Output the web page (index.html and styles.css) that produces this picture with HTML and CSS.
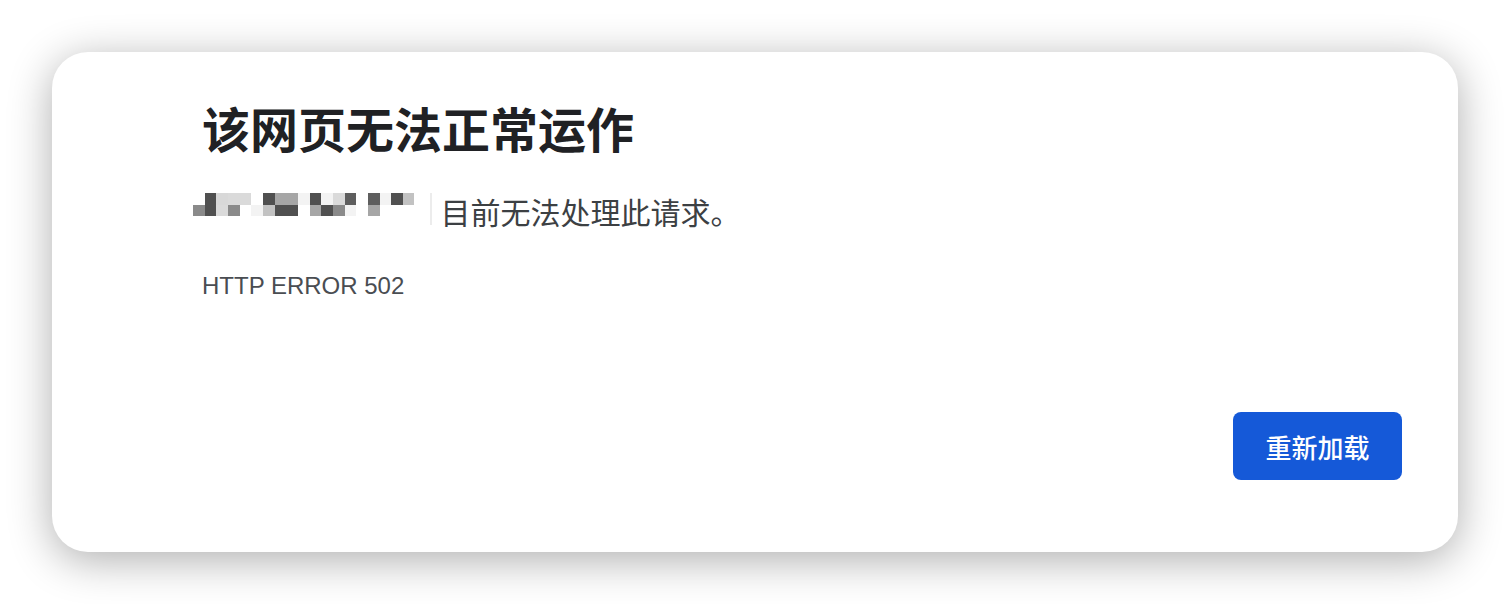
FILE: index.html
```html
<!DOCTYPE html>
<html lang="zh-CN">
<head>
<meta charset="utf-8">
<title>该网页无法正常运作</title>
<link rel="stylesheet" href="styles.css">
</head>
<body>
<div class="card">
  <div class="content">
    <h1 class="title">该网页无法正常运作</h1>
    <p class="subtitle">
      <span class="mosaic" aria-hidden="true">
        <span class="row">
          <i class="c0"></i><i class="c5"></i><i class="c3"></i><i class="c9"></i><i class="c9"></i><i class="c0"></i><i class="c5"></i><i class="c7"></i><i class="c7"></i><i class="c1"></i><i class="c5"></i><i class="c1"></i><i class="c9"></i><i class="c4"></i><i class="c0"></i><i class="c4"></i><i class="c1"></i><i class="c5"></i><i class="c8"></i>
        </span>
        <span class="row">
          <i class="c6"></i><i class="c5"></i><i class="c9"></i><i class="c6"></i><i class="c0"></i><i class="c1"></i><i class="c8"></i><i class="c5"></i><i class="c5"></i><i class="c0"></i><i class="c7"></i><i class="c5"></i><i class="c6"></i><i class="c1"></i><i class="c0"></i><i class="c7"></i><i class="c0"></i><i class="c0"></i><i class="c0"></i>
        </span>
      </span>
      <span class="caret" aria-hidden="true"></span>
      <span class="msg">目前无法处理此请求。</span>
    </p>
    <div class="code">HTTP ERROR 502</div>
  </div>
  <div class="actions">
    <button class="reload">重新加载</button>
  </div>
</div>
</body>
</html>
```

FILE: styles.css
```css
html, body {
  margin: 0;
  padding: 0;
  background: #ffffff;
}

body {
  padding: 52px;
  font-family: "Liberation Sans", "Noto Sans CJK SC", sans-serif;
}

.card {
  box-sizing: border-box;
  width: 1406px;
  height: 500px;
  background: #ffffff;
  border-radius: 36px;
  box-shadow: 0 8px 44px rgba(0, 0, 0, 0.32);
  padding: 45px 56px 72px 150px;
  display: flex;
  flex-direction: column;
}

.content {
  flex: 1;
  display: flex;
  flex-direction: column;
}

.title {
  margin: 0;
  font-family: "Noto Sans CJK SC", sans-serif;
  font-weight: 700;
  font-size: 48px;
  line-height: 60px;
  color: #202124;
}

.subtitle {
  margin: 36px 0 0 0;
  display: flex;
  align-items: flex-start;
  height: 40px;
}

.mosaic {
  display: flex;
  flex-direction: column;
  margin-left: -9px;
  filter: blur(0.6px);
}

.row {
  display: flex;
}

.row i {
  display: block;
  width: 11.67px;
  height: 11.5px;
}

.c0 { background: #ffffff; }
.c1 { background: #f3f3f3; }
.c3 { background: #d8d8d8; }
.c4 { background: #5e5e5e; }
.c5 { background: #505050; }
.c6 { background: #8a8a8a; }
.c7 { background: #a6a6a6; }
.c8 { background: #c2c2c2; }
.c9 { background: #dadada; }

.caret {
  display: block;
  width: 2px;
  height: 32px;
  margin-left: 16px;
  background: #ececec;
}

.msg {
  margin-left: 8px;
  margin-top: -2px;
  font-family: "Noto Sans CJK SC", sans-serif;
  font-size: 30px;
  line-height: 40px;
  color: #3c4043;
}

.code {
  margin-top: 38px;
  font-family: "Liberation Sans", sans-serif;
  font-size: 24px;
  line-height: 30px;
  color: #4a4d52;
}

.actions {
  display: flex;
  justify-content: flex-end;
}

.reload {
  width: 169px;
  height: 68px;
  border: none;
  border-radius: 8px;
  background: #1559d8;
  color: #ffffff;
  font-family: "Noto Sans CJK SC", sans-serif;
  font-weight: 500;
  font-size: 26px;
  padding: 0;
  cursor: pointer;
}
```
